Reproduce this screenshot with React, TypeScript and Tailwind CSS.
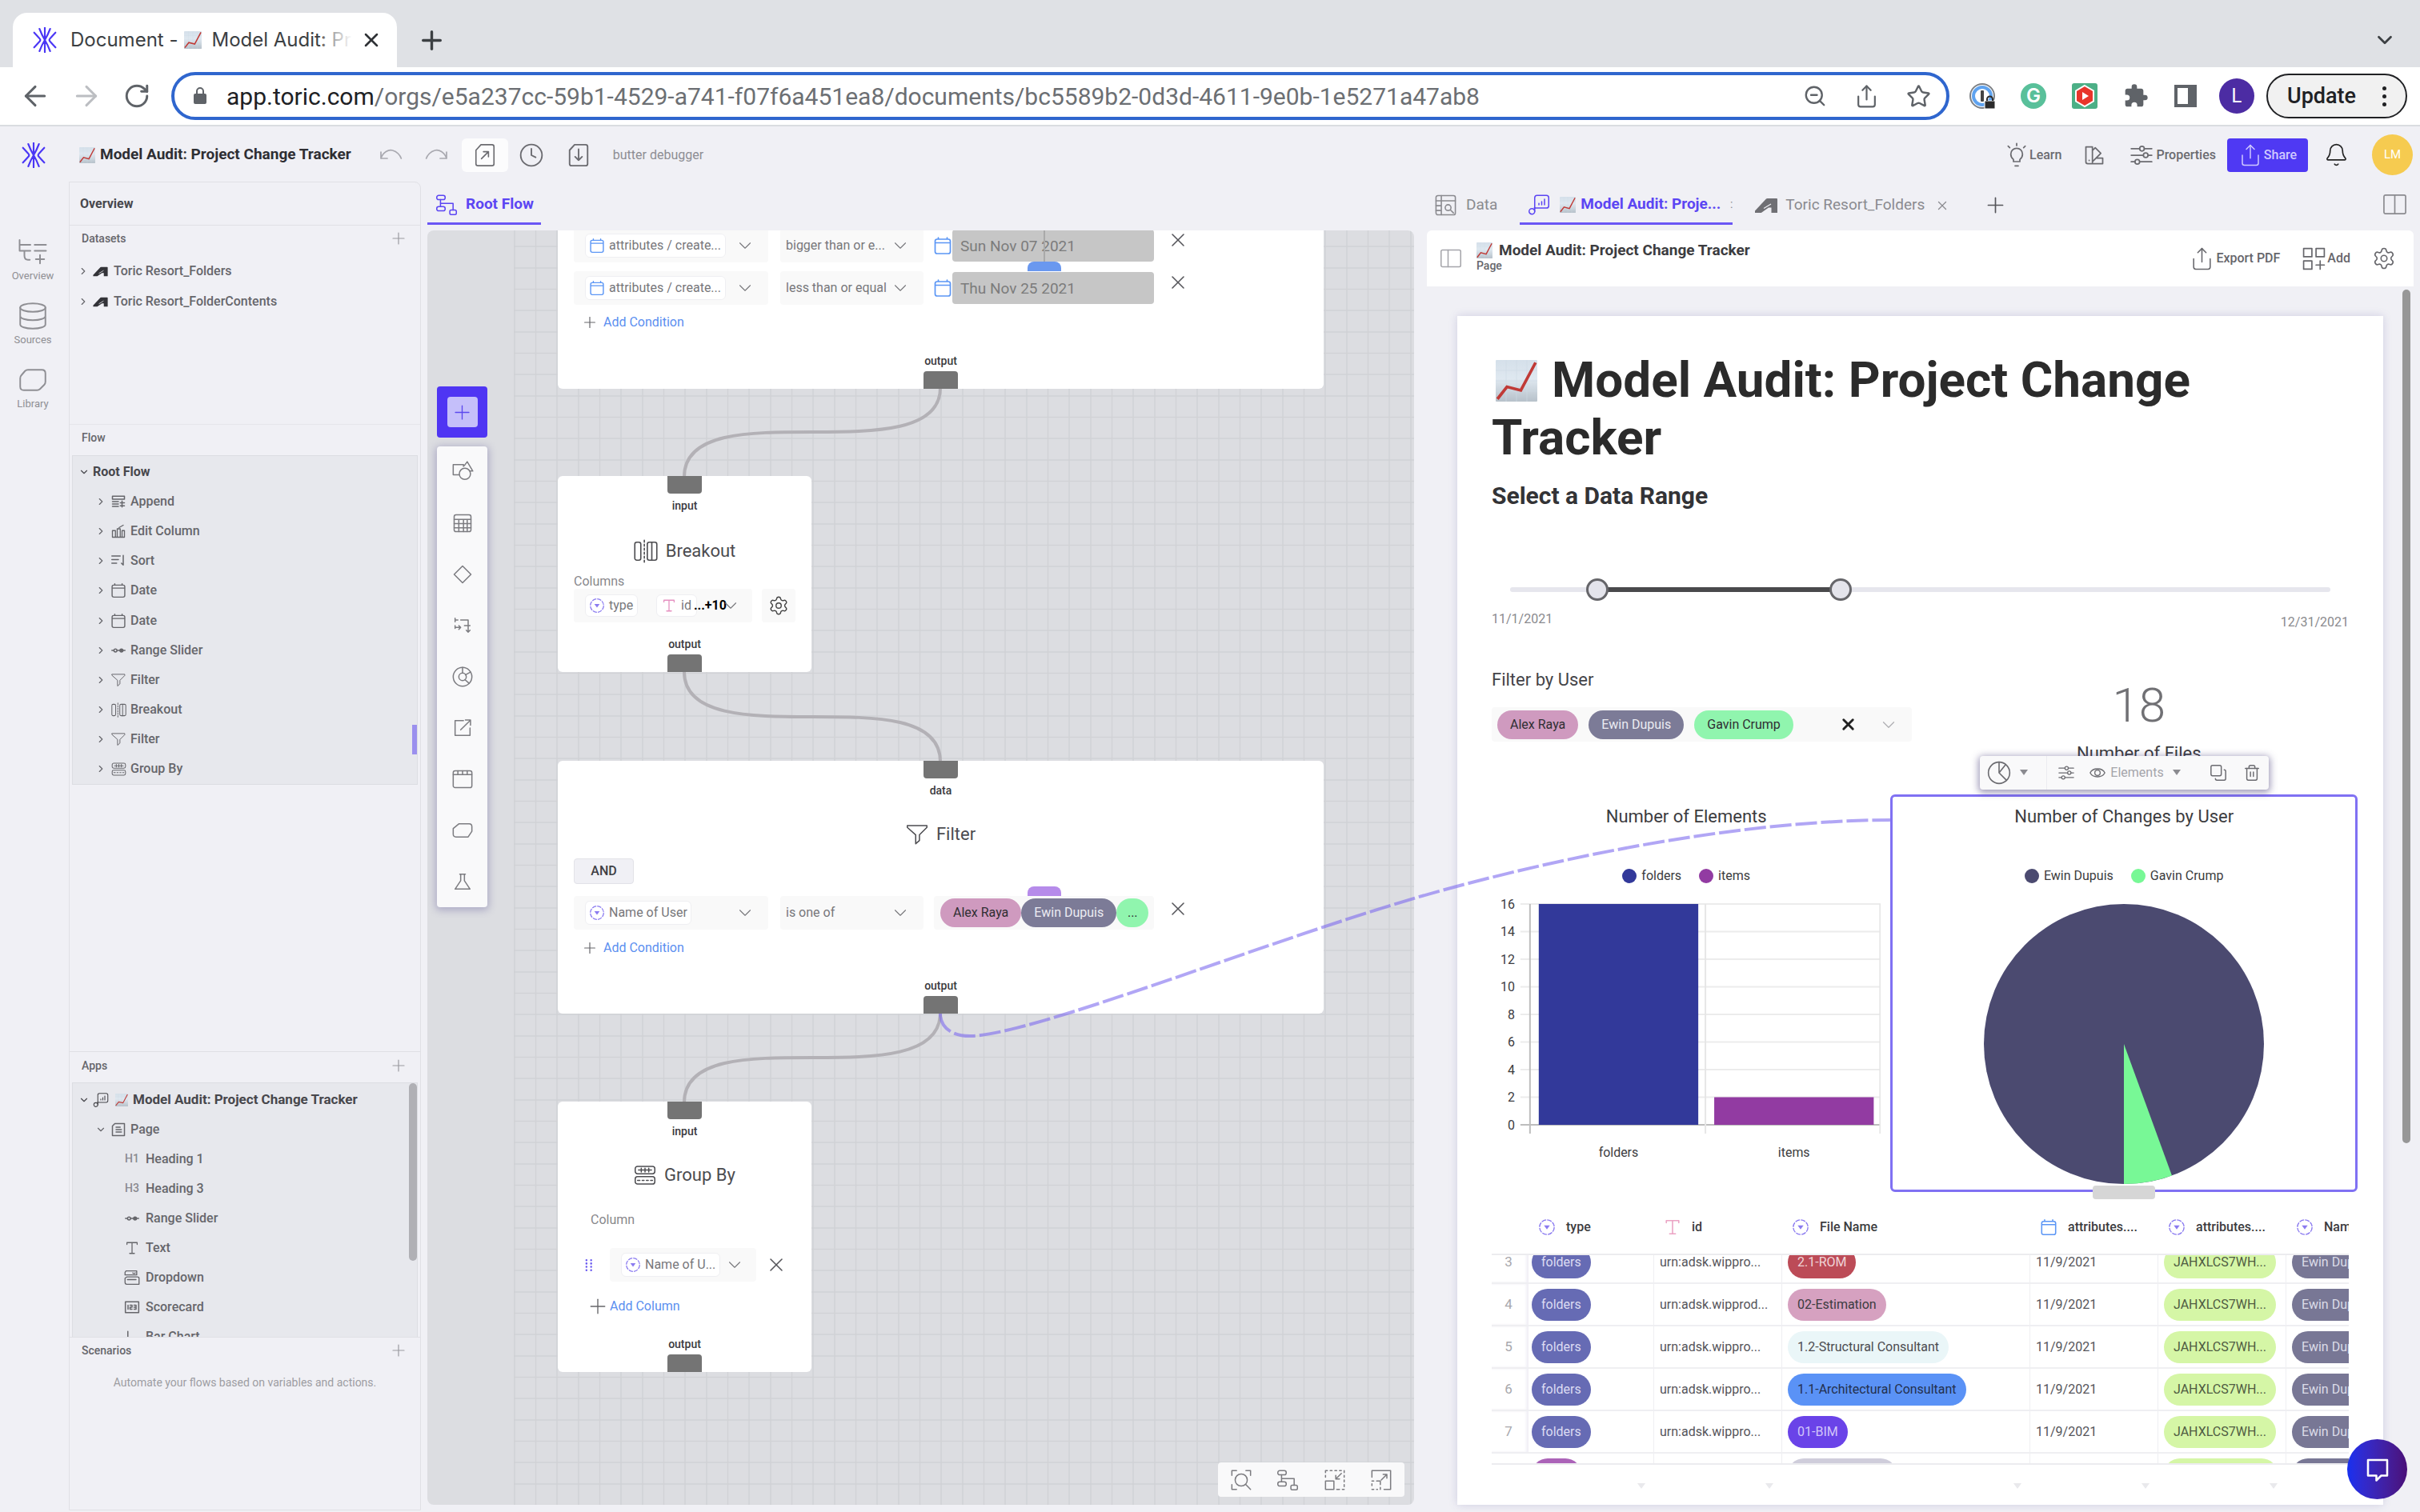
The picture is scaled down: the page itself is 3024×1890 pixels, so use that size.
import React, { useState } from 'react';
import {
  ArrowLeft,
  ArrowRight,
  Bell,
  ChevronDown,
  ChevronRight,
  Clock4,
  Copy,
  Plus,
  RotateCw,
  Settings,
  Share,
  Star,
  Trash2,
  X,
  ZoomOut,
} from 'lucide-react';

type IconProps = { className?: string };

/* ---------- Icons ---------- */

const Glyph: React.FC<{ className?: string; d: string; children?: React.ReactNode; sw?: number }> = ({
  className = 'size-6',
  d,
  children,
  sw = 1.3,
}) => (
  <svg
    viewBox="0 0 24 24"
    className={`shrink-0 ${className}`}
    fill="none"
    stroke="currentColor"
    strokeWidth={sw}
    strokeLinecap="round"
    strokeLinejoin="round"
    aria-hidden="true"
  >
    <path d={d} />
    {children}
  </svg>
);

const ToricLogo: React.FC<IconProps> = ({ className = 'size-8' }) => (
  <Glyph
    className={`text-[#4a36f5] ${className}`}
    sw={1.6}
    d="M12 0.5V23.5M7 1.5Q9.500 8 12 12Q9.500 16 7 22.5M17 1.5Q14.500 8 12 12Q14.500 16 17 22.5M2 5L7 10.500Q8.500 12 7 13.500L2 19M22 5L17 10.500Q15.500 12 17 13.500L22 19"
  />
);

const ChartUp: React.FC<IconProps> = ({ className = 'size-5' }) => (
  <svg viewBox="0 0 24 24" className={`shrink-0 ${className}`} role="img" aria-label="Chart increasing">
    <defs>
      <linearGradient id="paper" x1="0" y1="0" x2="0" y2="1">
        <stop offset="0" stopColor="#d5e0ea" />
        <stop offset="0.45" stopColor="#dfe8f0" />
        <stop offset="1" stopColor="#b7c1ca" />
      </linearGradient>
    </defs>
    <rect width="24" height="24" rx="0.500" fill="url(#paper)" />
    <path d="M0 6H24M0 12H24M0 18H24M6 0V24M12 0V24M18 0V24" stroke="#cddae4" strokeWidth="0.300" />
    <path d="M1 22.500L6.500 15.500L14.500 17.500L23 1.500" fill="none" stroke="#c03a36" strokeWidth="1.700" />
  </svg>
);

const Autodesk: React.FC<IconProps> = ({ className = 'size-5' }) => (
  <svg viewBox="0 0 28 20" className={`shrink-0 ${className}`} fill="currentColor" aria-hidden="true">
    <path d="M0 19V16.500L14 1.500Q14.500 1 15.500 1H27Q28 1 28 2V19H20.500V12.500H17L8.500 18.500Q8 19 7 19Z" />
    <path d="M11 13.500L20 8" stroke="#f0f0f5" strokeWidth="1.200" />
  </svg>
);

const FlowIcon: React.FC<IconProps> = ({ className }) => (
  <Glyph className={className} d="M5.500 6.500V14M5.500 10.500H19V17.500">
    <rect x="1.500" y="2" width="9" height="4.500" rx="2" />
    <rect x="1.500" y="14" width="9" height="4.500" rx="2" />
    <rect x="15.500" y="17.500" width="7" height="5" rx="1.500" />
  </Glyph>
);

const AppIcon: React.FC<IconProps> = ({ className }) => (
  <Glyph className={className} d="M7.500 16V4.500Q7.500 2 10 2H20Q22.500 2 22.500 4.500V13Q22.500 15.500 20 15.500H7M12 12V10.500M15 12V8.500M18 12V6">
    <ellipse cx="4.500" cy="19" rx="3" ry="3" />
    <path d="M7.500 19V15" />
  </Glyph>
);

const EnumIcon: React.FC<IconProps> = ({ className = 'size-[22px]' }) => (
  <svg viewBox="0 0 24 24" className={`shrink-0 text-[#8b7bf0] ${className}`} fill="none" stroke="currentColor" aria-hidden="true">
    <circle cx="12" cy="12" r="10" strokeWidth="1.500" strokeDasharray="6.500 1.350" />
    <path d="M8 9.500H16L12 15Z" fill="currentColor" stroke="none" />
  </svg>
);

const CalendarIcon: React.FC<IconProps> = ({ className = 'size-[22px] text-[#5b96f5]' }) => (
  <Glyph className={className} sw={1.700} d="M2.500 8.500H21.500M6.500 2V4M17.500 2V4M5 4H19Q21.500 4 21.500 6.500V19.500Q21.500 22 19 22H5Q2.500 22 2.500 19.500V6.500Q2.500 4 5 4Z" />
);

const TextIcon: React.FC<IconProps> = ({ className = 'size-5' }) => (
  <Glyph className={className} sw={1.700} d="M3.500 6V3H20.500V6M12 3V21M8 21H16" />
);

const LibraryIcon: React.FC<IconProps> = ({ className }) => (
  <Glyph className={className} d="M8 3.500H19.500Q22.500 3.500 22.500 6.500V13.500Q22.500 15 21.500 16L18 19.500Q17 20.500 15.500 20.500H4.500Q1.500 20.500 1.500 17.500V10.500Q1.500 9 2.500 8L5.500 4.500Q6.500 3.500 8 3.500Z" />
);

const SourcesIcon: React.FC<IconProps> = ({ className }) => (
  <Glyph className={className} d="M1.500 5V19C1.500 21 6 22.500 12 22.500S22.500 21 22.500 19V5M1.500 12C1.500 14 6 15.500 12 15.500S22.500 14 22.500 12">
    <ellipse cx="12" cy="5" rx="10.500" ry="3.500" />
  </Glyph>
);

const OverviewIcon: React.FC<IconProps> = ({ className }) => (
  <Glyph className={className} d="M1 2V6H10M1 6V11H10M5 11V15Q5 18.500 8 18.500H9.500M13.500 6H23M13.500 11H23M18 14.500V21.500M14.500 18H21.500" />
);

const FunnelIcon: React.FC<IconProps> = ({ className }) => (
  <Glyph className={className} d="M1.500 2.500H22.500V4.500L14.500 12.500V18.500L10.500 22V12.500L1.500 4.500Z" />
);

const BreakoutIcon: React.FC<IconProps> = ({ className }) => (
  <Glyph className={className} d="M10.500 1V3M10.500 5V7M10.500 9V11M10.500 13V15M10.500 17V19M10.500 21V23M18 3V21">
    <rect x="1" y="3" width="6" height="18" rx="2" />
    <rect x="13.500" y="3" width="9.500" height="18" rx="2" />
  </Glyph>
);

const GroupIcon: React.FC<IconProps> = ({ className }) => (
  <Glyph className={className} d="M5 6.500H19M8 4.500V8.500M12 4.500V8.500M16 4.500V8.500M4 17.500H6.500M9 17.500H11M13.500 17.500H15.500M18 17.500H20">
    <rect x="1.500" y="2.500" width="21" height="8" rx="2.500" />
    <rect x="1.500" y="13.500" width="21" height="8" rx="2.500" />
  </Glyph>
);

const SliderIcon: React.FC<IconProps> = ({ className }) => (
  <Glyph className={className} sw={2} d="M1 12H4M10 12H14M20 12H23">
    <circle cx="7" cy="12" r="2.500" />
    <circle cx="17" cy="12" r="2.500" fill="currentColor" />
  </Glyph>
);

const TuneIcon: React.FC<IconProps> = ({ className }) => (
  <Glyph className={className} sw={1.500} d="M1 5H10M15 5H23M1 12H14M19 12H23M1 19H5M10 19H23">
    <circle cx="12.500" cy="5" r="2.500" />
    <circle cx="16.500" cy="12" r="2.500" />
    <circle cx="7.500" cy="19" r="2.500" />
  </Glyph>
);

const SplitIcon: React.FC<IconProps & { at?: number }> = ({ className, at = 12 }) => (
  <Glyph className={className} d={`M${at} 3V21`}>
    <rect x="1.500" y="3" width="21" height="18" rx="1.500" />
  </Glyph>
);

/* ---------- Browser chrome ---------- */

const URL_REST = '/orgs/e5a237cc-59b1-4529-a741-f07f6a451ea8/documents/bc5589b2-0d3d-4611-9e0b-1e5271a47ab8';

const BrowserBar: React.FC = () => (
  <div className="shrink-0 font-['Inter',sans-serif]">
    <div className="flex h-[84px] items-end bg-[#dfe1e5] pl-4">
      <div className="flex h-[68px] w-[480px] items-center rounded-t-[18px] bg-white pl-6">
        <ToricLogo />
        <div className="relative ml-4 flex h-8 w-[352px] items-center overflow-hidden whitespace-nowrap text-[24px] text-[#3c4043]">
          Document -
          <ChartUp className="mx-2 size-[22px]" />
          <span className="ml-1">Model Audit: Pr</span>
          <span className="absolute right-0 h-full w-9 bg-linear-to-r from-white/30 to-white" />
        </div>
        <button aria-label="Close tab" className="ml-[10px] text-[#2f3236]">
          <X size={28} strokeWidth={2.200} />
        </button>
      </div>
      <button aria-label="New tab" className="ml-[25px] flex h-[68px] items-center text-[#3c4043]">
        <Plus size={37} strokeWidth={2.200} />
      </button>
      <button aria-label="Search tabs" className="mr-[29px] ml-auto flex h-[68px] items-center text-[#3c4043]">
        <ChevronDown size={30} strokeWidth={2.200} />
      </button>
    </div>

    <div className="flex h-[74px] items-center border-b-2 border-[#dadce0] bg-white pr-4 pl-[24px] text-[#5f6368]">
      <button aria-label="Back"><ArrowLeft size={40} strokeWidth={1.800} /></button>
      <button aria-label="Forward" className="ml-[24px] text-[#bcbec2]"><ArrowRight size={40} strokeWidth={1.800} /></button>
      <button aria-label="Reload" className="ml-[26px]"><RotateCw size={34} strokeWidth={2.100} /></button>
      <form className="ml-[26px] flex h-[60px] flex-1 items-center rounded-full border-4 border-[#2f66ce] pr-[19px] pl-6">
        <svg viewBox="0 0 16 22" className="h-[22px] w-4" aria-hidden="true">
          <rect y="8" width="16" height="13" rx="2" fill="#5f6368" />
          <path d="M4 8V5a4 4 0 0 1 8 0V8" fill="none" stroke="#5f6368" strokeWidth="2" />
        </svg>
        <a href={`https://app.toric.com${URL_REST}`} className="mr-auto ml-[25px] whitespace-nowrap font-['Roboto',sans-serif] text-[30px] text-[#6c6f73]">
          <span className="text-[#202124]">app.toric.com</span>{URL_REST}
        </a>
        <div className="flex items-center gap-[34px]">
          <button type="button" aria-label="Zoom out"><ZoomOut size={30} strokeWidth={1.900} /></button>
          <button type="button" aria-label="Share"><Share size={31} strokeWidth={1.700} /></button>
          <button type="button" aria-label="Bookmark"><Star size={31} strokeWidth={1.900} /></button>
        </div>
      </form>
      <div className="ml-[25px] flex items-center gap-8">
        <button aria-label="Password manager" className="relative size-8">
          <svg viewBox="0 0 32 32" className="size-8">
            <circle cx="16" cy="16" r="15" fill="#fff" stroke="#7d8085" strokeWidth="2" />
            <circle cx="16" cy="16" r="11" fill="none" stroke="#5fa3ef" strokeWidth="4" />
            <rect x="14" y="9" width="4" height="14" rx="1" fill="#444" />
            <path d="M19 22h13v10H19z" fill="#2b2b2b" stroke="#fff" />
            <path d="M22 22v-2a3.500 3.500 0 0 1 7 0v2" fill="none" stroke="#2b2b2b" strokeWidth="2" />
          </svg>
        </button>
        <button aria-label="Grammar" className="flex size-8 items-center justify-center rounded-full bg-[#59c09a] text-[24px] font-semibold text-white">G</button>
        <button aria-label="Recorder" className="size-8">
          <svg viewBox="0 0 32 32" className="size-8">
            <rect width="32" height="32" rx="3" fill="#4caf86" />
            <path d="M16 3L27 9.500V22.500L16 29L5 22.500V9.500Z" fill="#e8352b" stroke="#fff" strokeWidth="2" />
            <path d="M13 11L21 16L13 21Z" fill="#fff" />
          </svg>
        </button>
        <button aria-label="Extensions">
          <svg viewBox="0 0 24 24" className="size-8" fill="#5f6368">
            <path d="M20.500 11H19V7c0-1.100-.9-2-2-2h-4V3.500a2.500 2.500 0 0 0-5 0V5H4c-1.100 0-2 .9-2 2v3.800h1.500a2.700 2.700 0 0 1 0 5.400H2V20c0 1.100.9 2 2 2h3.800v-1.500a2.700 2.700 0 0 1 5.400 0V22H17c1.100 0 2-.9 2-2v-4h1.500a2.500 2.500 0 0 0 0-5Z" />
          </svg>
        </button>
        <button aria-label="Side panel" className="h-7 w-[28px] border-4 border-r-[11px] border-[#5f6368]" />
        <button aria-label="Profile" className="-ml-1 flex size-[44px] items-center justify-center rounded-full bg-[#4c2ca3] text-[24px] text-white">L</button>
      </div>
      <button className="ml-[15px] flex h-14 w-[176px] items-center justify-between rounded-full border-2 border-[#202124] bg-[#f1f1f1] pr-6 pl-6 font-['Roboto',sans-serif] text-[27px] font-medium text-[#202124]">
        Update
        <span className="flex flex-col gap-[5px]">
          <i className="size-[5px] rounded-full bg-[#202124]" />
          <i className="size-[5px] rounded-full bg-[#202124]" />
          <i className="size-[5px] rounded-full bg-[#202124]" />
        </span>
      </button>
    </div>
  </div>
);

/* ---------- App header ---------- */

const AppHeader: React.FC = () => (
  <header className="flex h-[69px] shrink-0 items-center pt-[2px] pr-[9px] pl-[26px] text-[16px] text-[#6b6b70]">
    <ToricLogo className="size-[32px]" />
    <ChartUp className="ml-[41px] size-5" />
    <h1 className="ml-[6px] text-[19px] font-bold text-[#2e2e33]">Model Audit: Project Change Tracker</h1>
    <button aria-label="Undo" className="ml-[33px] text-[#a9a9b0]"><Glyph className="size-8" d="M3 9V15H9M3 15C5 9 10 6.500 14 7.500S21 12 22 15" /></button>
    <button aria-label="Redo" className="ml-[26px] text-[#a9a9b0]"><Glyph className="size-8" d="M21 9V15H15M21 15C19 9 14 6.500 10 7.500S3 12 2 15" /></button>
    <button aria-label="Open document" className="ml-[15px] flex h-[42px] w-[58px] items-center justify-center rounded-md bg-white/80">
      <Glyph className="size-[30px]" d="M8 1.500H19Q21 1.500 21 3.500V20.500Q21 22.500 19 22.500H5Q3 22.500 3 20.500V7ZM8.500 15.500L15.500 8.500M10.500 8.500H15.500V13.500" />
    </button>
    <button aria-label="History" className="ml-[13px]"><Clock4 size={32} strokeWidth={1.400} /></button>
    <button aria-label="Download" className="ml-[28px]">
      <Glyph className="size-[30px]" sw={1.500} d="M8 1.500H19Q21 1.500 21 3.500V20.500Q21 22.500 19 22.500H5Q3 22.500 3 20.500V7ZM12 6V17M8.500 13.500L12 17L15.500 13.500" />
    </button>
    <span className="ml-[28px] text-[#8d8d93]">butter debugger</span>

    <div className="ml-auto flex items-center">
      <button className="flex items-center font-medium"><Glyph className="size-8" d="M9 18H15M10.500 22H13.500M9 18V16Q6.500 14 6.500 11A5.500 5.500 0 0 1 17.500 11Q17.500 14 15 16V18M12 1V3M4 3.500L5.500 5M20 3.500L18.500 5" />Learn</button>
      <button aria-label="Theme" className="ml-[27px]"><Glyph className="size-7" sw={1.500} d="M3 3H10V21H5Q3 21 3 19ZM10 7L13 4L19 10L10 19M14 15H21V21H8M6.500 17.500V17.600" /></button>
      <button className="ml-[31px] flex items-center gap-1 font-medium"><TuneIcon className="size-7" />Properties</button>
      <button className="ml-[14px] flex h-[42px] w-[101px] items-center justify-center gap-[2px] rounded bg-[#4f39f3] font-medium text-[#cfc9ff]">
        <Share size={30} strokeWidth={1.200} />Share
      </button>
      <button aria-label="Notifications" className="ml-[20px] text-[#222]"><Bell size={31} strokeWidth={1.300} /></button>
      <span className="ml-[29px] flex size-[51px] items-center justify-center rounded-full bg-[#f6cb50] text-[15px] text-white">LM</span>
    </div>
  </header>
);

/* ---------- Left rail and sidebar ---------- */

const NavRail: React.FC = () => (
  <nav className="flex w-[86px] shrink-0 flex-col items-center gap-6 pt-[70px] pr-1 text-[13px] text-[#8f8f94]">
    <button className="flex flex-col items-center gap-1 leading-4"><OverviewIcon className="size-9" />Overview</button>
    <button className="flex flex-col items-center gap-1 leading-4"><SourcesIcon className="size-9" />Sources</button>
    <button className="flex flex-col items-center gap-1 leading-4"><LibraryIcon className="size-9" />Library</button>
  </nav>
);

const SectionHead: React.FC<{ title: string; add?: boolean }> = ({ title, add }) => (
  <div className="flex h-8 items-center justify-between pr-[15px] pl-[15px] text-[14px] font-medium text-[#66666b]">
    <h3>{title}</h3>
    {add && <button aria-label={`Add to ${title}`} className="text-[#9a9aa0]"><Plus size={24} strokeWidth={1.200} /></button>}
  </div>
);

interface TreeItem {
  label: string;
  icon: React.ReactNode;
}

const flowItems: TreeItem[] = [
  { label: 'Append', icon: <Glyph className="size-[18px]" sw={2} d="M2 3H22V8H2ZM2 12H12M2 16H12M2 20H12M18 11V21M15 14H22M15 19H22" /> },
  { label: 'Edit Column', icon: <Glyph className="size-[18px]" sw={1.800} d="M2 22V11H7V22M10 22V8H15V22M18 22V11H22V22M2 22H22M13 6L20 2" /> },
  { label: 'Sort', icon: <Glyph className="size-[18px]" sw={2} d="M1 4H15M1 10H12M1 16H9M20 3V19M17 16L20 19" /> },
  { label: 'Date', icon: <CalendarIcon className="size-[20px]" /> },
  { label: 'Date', icon: <CalendarIcon className="size-[20px]" /> },
  { label: 'Range Slider', icon: <SliderIcon className="size-[18px]" /> },
  { label: 'Filter', icon: <FunnelIcon className="size-[18px]" /> },
  { label: 'Breakout', icon: <BreakoutIcon className="size-[19px]" /> },
  { label: 'Filter', icon: <FunnelIcon className="size-[18px]" /> },
  { label: 'Group By', icon: <GroupIcon className="size-[19px]" /> },
];

const appItems: TreeItem[] = [
  { label: 'Heading 1', icon: <span className="text-[14px] text-[#8a8a8f]">H1</span> },
  { label: 'Heading 3', icon: <span className="text-[14px] text-[#8a8a8f]">H3</span> },
  { label: 'Range Slider', icon: <SliderIcon className="size-[18px]" /> },
  { label: 'Text', icon: <TextIcon className="size-[18px]" /> },
  { label: 'Dropdown', icon: <Glyph className="size-[20px]" sw={1.600} d="M3 2H19V8H1.500V4ZM4 11H20Q22.500 11 22.500 13V22H4Q1.500 22 1.500 19V13ZM5 15H18M13 5L15 6L17 5" /> },
  { label: 'Scorecard', icon: <Glyph className="size-[20px]" sw={1.800} d="M2 4H22V20H2ZM6 9V15M9 9H12V12H9V15H12M15 9H18V15H15M15 12H18" /> },
  { label: 'Bar Chart', icon: <Glyph className="size-[18px]" sw={2} d="M5 3V21H21M9 21V13H13V21" /> },
];

const Sidebar: React.FC = () => (
  <aside className="mb-[2px] flex w-[440px] shrink-0 flex-col rounded-tr-lg border border-[#e0e0e5] text-[16px] font-medium text-[#66666b]">
    <h2 className="flex h-[54px] items-center border-b border-[#e0e0e5] pl-[13px] font-bold text-[#47474c]">Overview</h2>

    <section className="h-[248px]">
      <SectionHead title="Datasets" add />
      <ul className="pt-[6px]">
        {['Toric Resort_Folders', 'Toric Resort_FolderContents'].map((name) => (
          <li key={name}>
            <button className="flex h-[38px] items-center pl-[10px]">
              <ChevronRight size={14} />
              <Autodesk className="mr-[7px] ml-[5px] h-[13px] w-[19px] text-[#333338]" />
              {name}
            </button>
          </li>
        ))}
      </ul>
    </section>

    <section className="h-[784px] border-t border-[#e6e6eb]">
      <SectionHead title="Flow" />
      <ul className="relative mx-[3px] mt-[6px] flex h-[412px] flex-col border border-[#dcdde2] bg-[#e7e8ed] pt-px">
        <li className="flex flex-1 items-center pl-[7px] font-bold text-[#47474c]">
          <ChevronDown size={14} className="mr-1" />Root Flow
        </li>
        {flowItems.map((item, i) => (
          <li key={i} className="flex flex-1">
            <button className="flex items-center pl-7">
              <ChevronRight size={14} />
              <span className="mr-1 ml-[4px] flex w-[22px] justify-center">{item.icon}</span>
              {item.label}
            </button>
          </li>
        ))}
        <i className="absolute right-0 bottom-[37px] h-[37px] w-[6px] bg-[#9b90ee]" />
      </ul>
    </section>

    <section className="h-[357px] overflow-hidden border-t border-[#e0e0e5] pt-px">
      <SectionHead title="Apps" add />
      <ul className="relative mx-[3px] mt-[5px] flex h-[340px] flex-col border border-[#dcdde2] bg-[#e7e8ed] pt-[2px]">
        <li className="flex h-[37px] shrink-0 items-center pl-[7px] text-[17px] font-bold text-[#47474c]">
          <ChevronDown size={14} />
          <AppIcon className="mr-2 ml-[4px] size-5" />
          <ChartUp className="mr-[6px] size-4" />
          Model Audit: Project Change Tracker
        </li>
        <li className="flex h-[37px] shrink-0 items-center pl-7">
          <ChevronDown size={14} />
          <Glyph className="mr-[6px] ml-[6px] size-[18px]" sw={2} d="M6 2H22V22H2V6ZM8 8H15M8 12H17M8 16H17" />
          Page
        </li>
        {appItems.map((item) => (
          <li key={item.label} className="flex h-[37px] shrink-0">
            <button className="flex items-center pl-[63px]">
              <span className="mr-[6px] flex w-[22px] justify-center">{item.icon}</span>
              {item.label}
            </button>
          </li>
        ))}
        <i className="absolute top-0 right-0 h-[222px] w-[10px] rounded-full bg-[#b0b0b5]" />
      </ul>
    </section>

    <section className="border-t border-[#e0e0e5]">
      <SectionHead title="Scenarios" add />
      <p className="mt-[14px] text-center text-[14px] font-normal text-[#9d9da2]">Automate your flows based on variables and actions.</p>
    </section>
  </aside>
);

/* ---------- Flow canvas ---------- */

const Port: React.FC<{ label: string; side: 'top' | 'bottom' }> = ({ label, side }) => (
  <div className={`flex items-center text-[14px] leading-[18px] font-medium text-[#3a3a3e] ${side === 'top' ? 'flex-col gap-[6px]' : 'mt-auto flex-col-reverse gap-1'}`}>
    <i className={`h-[22px] w-[43px] bg-[#747474] ${side === 'top' ? 'rounded-b' : 'rounded-t'}`} />
    {label}
  </div>
);

const NodeTitle: React.FC<{ icon: React.ReactNode; title: string }> = ({ icon, title }) => (
  <h2 className="flex items-center justify-center gap-[10px] text-[22px] leading-7 text-[#4c4c50]">
    {icon}
    {title}
  </h2>
);

interface PickProps {
  label: string;
  value: string;
  icon?: React.ReactNode;
  className: string;
}

// Drop-down whose current value sits in a bordered chip when it has an icon
const Pick: React.FC<PickProps> = ({ label, value, icon, className }) => (
  <label className={`flex h-[42px] shrink-0 items-center justify-between rounded bg-[#f9f9f9] text-[16px] text-[#77777b] ${className}`}>
    <span className={icon ? 'flex h-[30px] items-center gap-[5px] rounded-md border border-[#efeff2] bg-white px-1' : ''}>
      {icon}
      <select aria-label={label} defaultValue={value} className="appearance-none bg-transparent">
        <option>{value}</option>
      </select>
    </span>
    <ChevronDown size={26} strokeWidth={1} className="shrink-0" />
  </label>
);

const RemoveButton: React.FC<{ className?: string }> = ({ className = '' }) => (
  <button aria-label="Remove" className={`text-[#55555a] ${className}`}><X size={28} strokeWidth={1.300} /></button>
);

const AddLink: React.FC<{ text: string; className: string }> = ({ text, className }) => (
  <button className={`flex h-5 items-center gap-[6px] text-[16px] text-[#5b8ff0] ${className}`}>
    <Plus size={22} strokeWidth={1.300} className="text-[#66666a]" />
    {text}
  </button>
);

const Tag: React.FC<{ text: string; className: string }> = ({ text, className }) => (
  <span className={`flex h-9 shrink-0 items-center justify-center rounded-full text-[16px] whitespace-nowrap ${className}`}>{text}</span>
);

const DateRow: React.FC<{ operator: string; date: string }> = ({ operator, date }) => (
  <div className="flex">
    <Pick label="Column" value="attributes / create..." icon={<CalendarIcon className="size-[20px] text-[#5b96f5]" />} className="w-[243px] pr-4 pl-[14px]" />
    <Pick label="Operator" value={operator} className="ml-[15px] w-[179px] pr-4 pl-[7px]" />
    <label className="ml-[12px] flex items-center">
      <CalendarIcon className="size-6 text-[#5b96f5]" />
      <input aria-label="Date" readOnly value={date} className="h-10 w-[252px] rounded bg-[#c6c6c6] px-[10px] text-[19px] text-[#7c7c7c]" />
    </label>
    <RemoveButton className="ml-[16px] h-7" />
  </div>
);

const toolIcons: { name: string; d: string; extra?: React.ReactNode }[] = [
  { name: 'Shapes', d: 'M8 15H2V4H13V6M14 5L17 1L23 11H20', extra: <circle cx="14.500" cy="14" r="6" /> },
  { name: 'Table', d: 'M3 8H21M8 8V21M13 8V21M17 8V21M3 12.500H21M3 17H21', extra: <rect x="3" y="3" width="18" height="18" rx="2" /> },
  { name: 'Condition', d: 'M12 3L21 12L12 21L3 12Z' },
  { name: 'Transform', d: 'M4 4V8M4 6H7M4 12V15M4 14H10M8 12L10 14L8 16M10 6H18V19M16 17L18 19L20 17M14 12H20' },
  { name: 'Charts', d: 'M12 2V8M15 10L20.500 7M14.500 15L19 19', extra: <><circle cx="12" cy="12" r="10" /><circle cx="12" cy="12" r="4" /></> },
  { name: 'Export', d: 'M13 4H4V20H20V12M10 14L20 4M15 3.500H20.500V9' },
  { name: 'Layout', d: 'M2 7H22M7 3V7M12 3V7M17 3V7', extra: <rect x="2" y="3" width="20" height="18" rx="2" /> },
  { name: 'Library', d: 'M8 5H19Q22 5 22 8V13L18 19H5Q2 19 2 16V10Z' },
  { name: 'Experiments', d: 'M9 4H15M10 4V11L4 20H20L14 11V4' },
];

const Toolbox: React.FC = () => (
  <div className="absolute top-[195px] left-3 flex w-[63px] flex-col gap-[11px]">
    <button aria-label="Add node" className="flex h-16 items-center justify-center rounded bg-[#4f35f3]">
      <span className="flex h-[38px] w-[38px] items-center justify-center rounded bg-[#c5bffa] text-[#5b48ee]"><Plus size={29} strokeWidth={1.100} /></span>
    </button>
    <div className="flex flex-col rounded bg-[#f9f9fa] text-[#7c7c80] shadow-[0_2px_10px_2px_rgba(90,80,150,0.35)]">
      {toolIcons.map((tool) => (
        <button key={tool.name} aria-label={tool.name} className="flex h-16 items-center justify-center">
          <Glyph className="size-7" d={tool.d}>{tool.extra}</Glyph>
        </button>
      ))}
    </div>
  </div>
);

const Canvas: React.FC = () => (
  <div className="relative flex-1 overflow-hidden rounded-lg bg-[#dcdde1]">
    <svg className="absolute inset-0 h-full w-full" aria-hidden="true">
      <defs>
        <pattern id="grid" x="108" y="46" width="80" height="80" patternUnits="userSpaceOnUse">
          <path d="M1 0V80M27.500 0V80M54 0V80M0 1H80M0 27.500H80M0 54H80" stroke="#d1d2d6" strokeWidth="1.500" />
        </pattern>
      </defs>
      <rect x="108" width="100%" height="100%" fill="url(#grid)" />
      <g fill="none" stroke="#b3b1b6" strokeWidth="4">
        <path d="M641 197C641 251 560 252 481 252S321 252 321 308" />
        <path d="M321 552C321 607 402 608 481 608S641 608 641 664" />
        <path d="M641 978C641 1033 560 1034 481 1034S321 1034 321 1090" />
      </g>
    </svg>

    {/* Date filter, scrolled partly out of view */}
    <div className="absolute top-0 left-[163px] flex h-[198px] w-[957px] flex-col overflow-hidden rounded-b-md bg-white pl-5">
      <div className="relative -mt-[2px] flex flex-col gap-[11px]">
        <DateRow operator="bigger than or e..." date="Sun Nov 07 2021" />
        <DateRow operator="less than or equal" date="Thu Nov 25 2021" />
        <i className="absolute top-0 left-[587px] h-[42px] w-[2px] bg-[#a9a9a9]" />
        <i className="absolute top-[41px] left-[567px] h-3 w-[42px] rounded-t-lg bg-[#6a98ef]" />
      </div>
      <AddLink text="Add Condition" className="mt-[12px] ml-[9px]" />
      <div className="mt-auto -ml-5 flex flex-col"><Port label="output" side="bottom" /></div>
    </div>

    <div className="absolute top-[307px] left-[163px] flex h-[245px] w-[317px] flex-col rounded-md bg-white">
      <Port label="input" side="top" />
      <div className="mt-[33px]"><NodeTitle icon={<BreakoutIcon className="size-[30px]" />} title="Breakout" /></div>
      <p className="mt-[14px] ml-5 text-[16px] leading-[18px] text-[#88888c]">Columns</p>
      <div className="ml-5 flex gap-3 text-[16px] text-[#77777b]">
        <button className="flex h-[42px] w-[223px] items-center rounded bg-[#f9f9f9] pl-[14px]">
          <span className="flex h-7 w-[66px] items-center gap-[5px] rounded-md border border-[#efeff2] bg-white px-1"><EnumIcon className="size-5" />type</span>
          <span className="ml-[23px] flex h-7 items-center gap-[6px] rounded-md border border-[#efeff2] bg-white px-[6px]"><TextIcon className="size-[18px] text-[#e58fc0]" />id</span>
          <b className="-ml-1 text-black">...+10</b>
          <ChevronDown size={26} strokeWidth={1} className="-ml-2" />
        </button>
        <button aria-label="Column settings" className="flex size-[42px] items-center justify-center rounded bg-[#f9f9f9] text-[#444]"><Settings size={26} strokeWidth={1.300} /></button>
      </div>
      <Port label="output" side="bottom" />
    </div>

    <div className="absolute top-[663px] left-[163px] flex h-[316px] w-[957px] flex-col rounded-md bg-white">
      <Port label="data" side="top" />
      <div className="mt-[32px]"><NodeTitle icon={<FunnelIcon className="size-[28px]" />} title="Filter" /></div>
      <button className="mt-[16px] ml-5 h-8 w-[75px] rounded border border-[#e2e2e8] bg-[#f0f0f5] text-[16px] font-medium text-[#3f3f44]">AND</button>
      <div className="relative mt-[15px] ml-5 flex">
        <Pick label="Column" value="Name of User" icon={<EnumIcon className="size-5" />} className="w-[243px] pr-4 pl-[14px]" />
        <Pick label="Operator" value="is one of" className="ml-[15px] w-[179px] pr-4 pl-[7px]" />
        <div className="ml-[13px] flex h-[42px] w-[275px] items-center rounded bg-[#f9f9f9] pl-[8px]">
          <Tag text="Alex Raya" className="bg-[#cf9abf] px-4 text-[#2f2f33]" />
          <Tag text="Ewin Dupuis" className="bg-[#7c7b97] px-4 text-[#ebebf2]" />
          <Tag text="..." className="w-10 bg-[#90f5ae] text-[#2f2f33]" />
        </div>
        <RemoveButton className="ml-[16px] h-8" />
        <i className="absolute -top-3 left-[567px] h-3 w-[42px] rounded-t-lg bg-[#b68bea]" />
      </div>
      <AddLink text="Add Condition" className="mt-[13px] ml-[29px]" />
      <Port label="output" side="bottom" />
    </div>

    <div className="absolute top-[1089px] left-[163px] flex h-[338px] w-[317px] flex-col rounded-md bg-white">
      <Port label="input" side="top" />
      <div className="mt-[32px]"><NodeTitle icon={<GroupIcon className="size-[28px]" />} title="Group By" /></div>
      <p className="mt-[32px] ml-[41px] text-[16px] leading-5 text-[#88888c]">Column</p>
      <div className="mt-[25px] ml-[34px] flex items-center">
        <Glyph className="-ml-1 size-[20px] text-[#6b5bf0]" sw={3} d="M7 5V5.100M7 10V10.100M7 15V15.100M7 20V20.100M14 5V5.100M14 10V10.100M14 15V15.100M14 20V20.100" />
        <Pick label="Group column" value="Name of U..." icon={<EnumIcon className="size-5" />} className="ml-[15px] w-[183px] pr-[14px] pl-[14px]" />
        <RemoveButton className="ml-[11px]" />
      </div>
      <button className="mt-[21px] ml-[35px] flex h-5 items-center text-[16px] text-[#5b8ff0]">
        <Plus size={30} strokeWidth={1.100} className="text-[#66666a]" />Add Column
      </button>
      <Port label="output" side="bottom" />
    </div>

    <Toolbox />

    <div className="absolute right-3 bottom-[10px] flex h-[43px] w-[233px] items-center justify-around rounded bg-[#f9f9fa] text-[#7c7c80]">
      <button aria-label="Zoom to fit"><Glyph className="size-7" d="M2 7V2H7M17 2H22V7M2 17V22H7M17 17L22 22"><circle cx="12" cy="12" r="6.500" /></Glyph></button>
      <button aria-label="Auto layout"><FlowIcon className="size-7" /></button>
      <button aria-label="Collapse all"><Glyph className="size-7" d="M2 13H11V22H2ZM2 9V7M2 4V2H4M7 2H9M12 2H14M17 2H19M22 2V4M22 7V9M22 12V14M22 17V19M22 22H20M17 22H14M13 11L19 5M13 7V11H17" /></button>
      <button aria-label="Expand all"><Glyph className="size-7" d="M2 9V2H22V22H15M2 13H4M7 13H11V17M11 20V22M2 16V18M2 22H4M7 22H8M12 12L18 6M14 6H18V10" /></button>
    </div>
  </div>
);

const FlowPanel: React.FC = () => (
  <main className="ml-2 flex min-w-0 flex-1 flex-col">
    <div role="tablist" className="flex h-[61px] shrink-0">
      <button role="tab" aria-selected="true" className="flex h-[54px] w-[142px] items-center gap-[10px] border-b-[3px] border-[#6a56f5] pt-[6px] pl-[10px] text-[19px] font-bold text-[#5b45f3]">
        <FlowIcon className="size-7" />
        Root Flow
      </button>
    </div>
    <Canvas />
  </main>
);

/* ---------- Report panel ---------- */

const DAYS = 60;
const TRACK_INSET = 8;
const TRACK_TAIL = 5;

const rangeInputClass =
  'pointer-events-none absolute inset-y-0 -left-[6px] h-7 w-[calc(100%+15px)] appearance-none bg-transparent [&::-webkit-slider-thumb]:pointer-events-auto [&::-webkit-slider-thumb]:size-7 [&::-webkit-slider-thumb]:appearance-none [&::-webkit-slider-thumb]:rounded-full [&::-webkit-slider-thumb]:border-[3px] [&::-webkit-slider-thumb]:border-[#66666a] [&::-webkit-slider-thumb]:bg-[#e4e4eb]';

const RangeSlider: React.FC = () => {
  const [from, setFrom] = useState(6);
  const [to, setTo] = useState(24);
  const at = (day: number) => `calc(${TRACK_INSET}px + (100% - ${TRACK_INSET + TRACK_TAIL}px) * ${day / DAYS})`;

  return (
    <div className="mt-[85px]">
      <div className="relative mr-[23px] ml-[23px] h-7">
        <i className="absolute inset-x-0 top-[11px] h-[6px] rounded-full bg-[#e6e6ed]" />
        <i className="absolute top-[11px] h-[6px] bg-[#4a4a4c]" style={{ left: at(from), width: `calc((100% - ${TRACK_INSET + TRACK_TAIL}px) * ${(to - from) / DAYS})` }} />
        <input type="range" aria-label="From" min={0} max={DAYS} value={from} onChange={(e) => setFrom(Number(e.target.value))} className={rangeInputClass} />
        <input type="range" aria-label="To" min={0} max={DAYS} value={to} onChange={(e) => setTo(Number(e.target.value))} className={rangeInputClass} />
      </div>
      <div className="mt-[13px] flex items-start justify-between text-[16px] leading-5 text-[#8a8a8e]">
        <span>11/1/2021</span>
        <span className="mt-1">12/31/2021</span>
      </div>
    </div>
  );
};

const Legend: React.FC<{ items: { name: string; dot: string }[] }> = ({ items }) => (
  <ul className="mt-[50px] flex justify-center gap-[22px] text-[16px] leading-5 text-[#3c3c40]">
    {items.map((item) => (
      <li key={item.name} className="flex items-center gap-[6px]">
        <i className={`size-[18px] rounded-full ${item.dot}`} />
        {item.name}
      </li>
    ))}
  </ul>
);

const bars = [
  { name: 'folders', value: 16, fill: '#32399a', x: 59 },
  { name: 'items', value: 2, fill: '#923ba2', x: 279 },
];

const barY = (v: number) => 292 - (v / 16) * 277;

const BarChart: React.FC = () => (
  <section className="min-w-0 pt-[14px]">
    <h3 className="text-center text-[22px] leading-7 text-[#3c3c40]">Number of Elements</h3>
    <Legend items={[{ name: 'folders', dot: 'bg-[#32399a]' }, { name: 'items', dot: 'bg-[#923ba2]' }]} />
    <svg viewBox="0 0 488 345" className="mt-[10px] w-full" fontSize="16" fill="#3c3c40">
      {[16, 14, 12, 10, 8, 6, 4, 2, 0].map((v) => (
        <g key={v}>
          <path d={`M36 ${barY(v)}H488`} stroke={v ? '#ececec' : '#bdbdbd'} strokeWidth="2" />
          <text x="29" y={barY(v) + 6} textAnchor="end">{v}</text>
        </g>
      ))}
      <path d="M268 15V303M487 15V303" stroke="#e6e6e6" strokeWidth="2" />
      <path d="M48 15V303" stroke="#bdbdbd" strokeWidth="2" />
      {bars.map((bar) => (
        <g key={bar.name}>
          <rect x={bar.x} y={barY(bar.value)} width="200" height={292 - barY(bar.value)} fill={bar.fill} />
          <text x={bar.x + 100} y="332" textAnchor="middle">{bar.name}</text>
        </g>
      ))}
    </svg>
  </section>
);

const ElementToolbar: React.FC = () => (
  <div className="absolute -top-[51px] left-[109px] flex h-[42px] w-[361px] items-center rounded bg-[#f9f9fa] text-[#6b6b70] shadow-[0_2px_8px_2px_rgba(70,60,120,0.5)]">
    <button aria-label="Chart type" className="flex h-full w-[84px] items-center gap-[10px] border-r border-[#ececf0] pl-[8px]">
      <Glyph className="size-8" sw={1.200} d="M12 2V12L19 19M12 12L18 4.500"><circle cx="12" cy="12" r="10" /></Glyph>
      <svg viewBox="0 0 10 8" className="h-2 w-[10px]"><path d="M0 0H10L5 7Z" fill="#8b8b90" /></svg>
    </button>
    <button aria-label="Chart options" className="ml-[14px]"><TuneIcon className="size-5" /></button>
    <button className="ml-[19px] flex items-center gap-[6px] text-[16px] text-[#a5a5aa]">
      <Glyph className="size-5 text-[#6b6b70]" sw={1.600} d="M1 12C5 4 19 4 23 12C19 20 5 20 1 12Z"><circle cx="12" cy="12" r="4" /></Glyph>
      Elements
      <svg viewBox="0 0 10 8" className="ml-[5px] h-2 w-[10px]"><path d="M0 0H10L5 7Z" fill="#8b8b90" /></svg>
    </button>
    <button aria-label="Duplicate" className="ml-auto"><Copy size={22} strokeWidth={1.600} className="-scale-100" /></button>
    <button aria-label="Delete" className="mr-[10px] ml-[20px]"><Trash2 size={22} strokeWidth={1.600} /></button>
  </div>
);

const PieChart: React.FC = () => (
  <section className="relative z-20 min-w-0 rounded-md border-[3px] border-[#8071f3] bg-white pt-[11px]">
    <ElementToolbar />
    <h3 className="text-center text-[22px] leading-7 text-[#3c3c40]">Number of Changes by User</h3>
    <Legend items={[{ name: 'Ewin Dupuis', dot: 'bg-[#4b4a70]' }, { name: 'Gavin Crump', dot: 'bg-[#78f896]' }]} />
    <svg viewBox="-175 -175 350 350" className="mx-auto mt-[25px] size-[350px]">
      <circle r="175" fill="#4b4a70" />
      <path d="M0 0V175A175 175 0 0 0 60 164.400Z" fill="#78f896" />
    </svg>
    <i className="absolute -bottom-[12px] left-1/2 h-[17px] w-[78px] -translate-x-1/2 rounded bg-[#d6d6d6]" />
  </section>
);

const files = [
  { name: '2.1-ROM', urn: 'urn:adsk.wippro...', pill: 'bg-[#bc4b57] text-[#f0d5d8]' },
  { name: '02-Estimation', urn: 'urn:adsk.wipprod...', pill: 'bg-[#d6a1c0] text-[#3c3c40]' },
  { name: '1.2-Structural Consultant', urn: 'urn:adsk.wippro...', pill: 'bg-[#eaf6f8] text-[#4c4c50]' },
  { name: '1.1-Architectural Consultant', urn: 'urn:adsk.wippro...', pill: 'bg-[#5a92f6] text-[#24304d]' },
  { name: '01-BIM', urn: 'urn:adsk.wippro...', pill: 'bg-[#6a43e8] text-[#d2c6fa]' },
];

const columns = [
  { title: 'type', icon: <EnumIcon /> },
  { title: 'id', icon: <TextIcon className="size-[22px] text-[#eba3c4]" /> },
  { title: 'File Name', icon: <EnumIcon /> },
  { title: 'attributes....', icon: <CalendarIcon /> },
  { title: 'attributes....', icon: <EnumIcon /> },
  { title: 'Name', icon: <EnumIcon /> },
];

const gridCols = 'grid grid-cols-[46px_157px_160px_310px_160px_160px_160px]';
const cell = 'flex items-center overflow-hidden border-b-2 border-r border-[#efeff2] pl-[7px] whitespace-nowrap';
const firstCell = 'flex items-center border-b-2 border-r border-[#efeff2] pl-[4px]';
const pill = 'flex h-10 shrink-0 items-center rounded-[20px] px-[12px]';

const FileTable: React.FC = () => (
  <>
    <table className="mt-[11px] block overflow-hidden text-[16px] text-[#3c3c40]">
      <thead className="block">
        <tr className={`${gridCols} h-[66px] w-full`}>
          <th aria-label="Row" />
          {columns.map((col, i) => (
            <th key={i} scope="col" className="flex items-center gap-[13px] pl-[12px] font-medium whitespace-nowrap">{col.icon}{col.title}</th>
          ))}
        </tr>
      </thead>
      <tbody className="block h-[264px] overflow-hidden border-y-2 border-[#ececef]">
        {files.map((file, i) => (
          <tr key={file.name} className={`${gridCols} h-[53px] ${i === 0 ? '-mt-[17px]' : ''}`}>
            <td className="flex items-center justify-center border-b-2 border-[#efeff2] pr-1 text-[17px] text-[#a8a8ad] shadow-[inset_-3px_0_3px_rgba(80,70,140,0.08)]">{i + 3}</td>
            <td className={firstCell}><span className={`${pill} bg-[#666bb4] text-[#dcdcf2]`}>folders</span></td>
            <td className={`${cell} text-[#55555a]`}>{file.urn}</td>
            <td className={cell}><span className={`${pill} ${file.pill}`}>{file.name}</span></td>
            <td className={`${cell} text-[#55555a]`}>11/9/2021</td>
            <td className={cell}><span className={`${pill} bg-[#d5f6a6] text-[#4f5c42]`}>JAHXLCS7WH...</span></td>
            <td className={cell}><span className={`${pill} bg-[#787795] text-[#dcdce8]`}>Ewin Dupuis</span></td>
          </tr>
        ))}
        <tr className={`${gridCols} h-[53px]`}>
          <td className="flex" />
          <td className={firstCell}><span className={`${pill} w-[62px] bg-[#ab63b8]`} /></td>
          <td className={cell} />
          <td className={cell}><span className={`${pill} w-[136px] bg-[#cfcddb]`} /></td>
          <td className={cell} />
          <td className={cell}><span className={`${pill} w-[142px] bg-[#d5f6a6]`} /></td>
          <td className={cell}><span className={`${pill} w-[120px] bg-[#787795]`} /></td>
        </tr>
      </tbody>
    </table>
    <div className={`${gridCols} mt-[23px] overflow-hidden`}>
      {[0, 1, 2, 3, 4, 5].map((n) => (
        <svg key={n} viewBox="0 0 10 8" className={`mr-[11px] h-2 w-[10px] justify-self-end ${n === 0 ? 'invisible' : ''}`}><path d="M0 0H10L5 7Z" fill="#e9e9ec" /></svg>
      ))}
    </div>
  </>
);

const ReportPage: React.FC = () => (
  <article className="mr-[38px] ml-[38px] flex flex-1 flex-col bg-white px-[43px] pt-[44px] shadow-[0_0_10px_rgba(90,80,160,0.22)]">
    <h1 className="text-[62px] leading-[72px] font-bold text-[#2b2b2b]">
      <ChartUp className="mr-[18px] ml-[5px] inline-block size-[52px] align-[-6px]" />
      Model Audit: Project Change Tracker
    </h1>
    <h2 className="mt-[19px] text-[30px] leading-9 font-bold text-[#333336]">Select a Data Range</h2>
    <RangeSlider />

    <div className="mt-[49px] grid h-[116px] grid-cols-2 gap-[22px]">
      <div>
        <p className="text-[22px] leading-[26px] text-[#444448]">Filter by User</p>
        <div className="mt-[21px] flex h-[43px] items-center gap-[13px] rounded bg-[#f9f9f9] pr-4 pl-[7px]">
          <Tag text="Alex Raya" className="bg-[#cf9abf] px-4 text-[#2f2f33]" />
          <Tag text="Ewin Dupuis" className="bg-[#7c7b97] px-4 text-[#ebebf2]" />
          <Tag text="Gavin Crump" className="bg-[#90f5ae] px-4 text-[#2f2f33]" />
          <button aria-label="Clear users" className="ml-auto text-[#222]"><X size={23} strokeWidth={3} /></button>
          <button aria-label="Show users" className="ml-[13px] text-[#b0b0b4]"><ChevronDown size={26} strokeWidth={1.200} /></button>
        </div>
      </div>
      <div className="pt-[9px] text-center text-[#3c3c40]">
        <p className="text-[60px] leading-[72px] font-light text-[#707074]">18</p>
        <p className="mt-[11px] text-[22px] leading-[26px]">Number of Files</p>
      </div>
    </div>

    <div className="mt-[40px] -mr-[11px] grid h-[497px] grid-cols-[5fr_6fr] gap-3">
      <BarChart />
      <PieChart />
    </div>
    <FileTable />
  </article>
);

const ReportPanel: React.FC = () => (
  <section className="mr-2 ml-4 flex min-w-0 flex-1 flex-col">
    <div role="tablist" className="flex h-[61px] shrink-0 items-start text-[19px] text-[#8a8a8f]">
      <button role="tab" className="flex h-[59px] items-center gap-[11px] pl-[9px]">
        <Glyph className="size-[29px]" d="M2 7.500H22M7.500 2V22M2 12.500H7.500M2 17.500H7.500M17 17L20 20"><rect x="2" y="2" width="20" height="20" rx="2" /><circle cx="14.500" cy="14.500" r="3" /></Glyph>
        Data
      </button>
      <button role="tab" aria-selected="true" className="ml-7 flex h-[54px] w-[266px] items-center justify-between border-b-[3px] border-[#6a56f5] pt-[6px] pl-[10px] font-bold text-[#5b45f3]">
        <AppIcon className="mr-3 size-7" />
        <ChartUp className="mr-[6px] size-5" />
        <span className="mr-auto">Model Audit: Proje...</span>
        <span className="text-[14px] font-normal text-[#8a8a8f]">:</span>
      </button>
      <button role="tab" className="ml-7 flex h-[59px] items-center">
        <Autodesk className="mr-[10px] h-5 w-7 text-[#6f6f74]" />
        Toric Resort_Folders
        <X size={18} strokeWidth={1.700} className="ml-[13px]" />
      </button>
      <button aria-label="New tab" className="ml-[42px] flex h-[59px] items-center text-[#55555a]"><Plus size={31} strokeWidth={1.300} /></button>
      <button aria-label="Split view" className="mr-2 ml-auto flex h-[56px] items-center"><SplitIcon className="size-[31px]" /></button>
    </div>

    <div className="flex h-[70px] shrink-0 items-center rounded-t-md bg-white pr-[22px] pl-4 text-[16px] font-medium text-[#66666b]">
      <button aria-label="Toggle pages" className="text-[#a5a5aa]"><SplitIcon className="size-[28px]" at={9} /></button>
      <div className="ml-[18px] self-start pt-[15px]">
        <h2 className="flex items-center gap-2 text-[19px] leading-5 font-bold text-[#3c3c40]"><ChartUp className="size-5" />Model Audit: Project Change Tracker</h2>
        <p className="text-[14px] leading-[18px]">Page</p>
      </div>
      <button className="ml-auto flex items-center gap-[2px]"><Share size={31} strokeWidth={1.200} />Export PDF</button>
      <button className="ml-[27px] flex items-center gap-px">
        <Glyph className="size-[31px]" d="M2 2H10V10H2ZM14 2H22V10H14ZM2 14H10V22H2ZM18 14V22M14 18H22" />Add
      </button>
      <button aria-label="Page settings" className="ml-[27px]"><Settings size={30} strokeWidth={1.300} /></button>
    </div>

    <div className="relative flex flex-1 flex-col pt-[37px]">
      <ReportPage />
      <i className="absolute top-1 right-1 h-[1067px] w-[10px] rounded-full bg-[#979797]" />
    </div>
  </section>
);

const App: React.FC = () => (
  <div className="flex h-screen min-h-[1890px] flex-col bg-[#f0f0f5] font-['Roboto',sans-serif]">
    <BrowserBar />
    <AppHeader />
    <div className="relative flex min-h-0 flex-1">
      <NavRail />
      <Sidebar />
      <div className="flex min-w-0 flex-1 pb-[9px]">
        <FlowPanel />
        <ReportPanel />
      </div>
      <svg className="pointer-events-none absolute inset-0 z-10 h-full w-full" aria-hidden="true">
        <path
          d="M1175 1040C1175 1056 1188 1069 1215 1068C1300 1063 1570 954 1770 895C1950 843 2180 798 2363 798"
          fill="none"
          stroke="#7d6aee"
          strokeOpacity="0.6"
          strokeWidth="4"
          strokeDasharray="27 5"
        />
      </svg>
      <button aria-label="Open chat" className="absolute right-4 bottom-4 z-30 flex size-[75px] items-center justify-center rounded-full bg-linear-to-r from-[#1530f0] to-[#4a0f78] text-white">
        <Glyph className="size-9" sw={1.700} d="M4 4H20V17H15L11 21V17H4Z" />
      </button>
    </div>
  </div>
);

export default App;
